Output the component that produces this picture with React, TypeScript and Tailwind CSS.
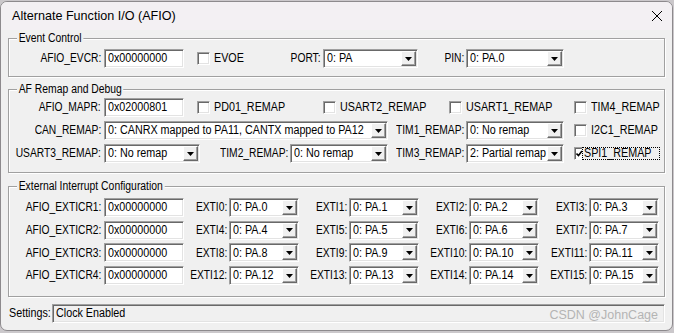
import type { ReactNode } from 'react'

// classic win32 sunken edge (edit boxes, combos, checkboxes)
const SUNKEN =
  'border border-t-[#a0a0a0] border-l-[#a0a0a0] border-r-white border-b-white shadow-[inset_1px_1px_0_#696969,inset_-1px_-1px_0_#e3e3e3]'

// the dialog font is a narrow sans; Liberation Sans squeezed horizontally stands in for it
function T({ children, right = false }: { children: ReactNode; right?: boolean }) {
  return (
    <span className={right ? 'inline-block shrink-0 origin-right scale-x-[0.82]' : 'inline-block shrink-0 origin-left scale-x-[0.86]'}>
      {children}
    </span>
  )
}

function Label({ className, children }: { className: string; children: ReactNode }) {
  return (
    <div className={`${className} shrink-0 flex justify-end whitespace-nowrap`}>
      <T right>{children}</T>
    </div>
  )
}

function Edit({ value }: { value: string }) {
  return (
    <div className={`w-[80px] h-[19px] shrink-0 bg-white ${SUNKEN} flex items-center pl-[3px] whitespace-nowrap`}>
      <T>{value}</T>
    </div>
  )
}

function Combo({ className, value }: { className: string; value: string }) {
  return (
    <div className={`${className} h-[19px] shrink-0 bg-white ${SUNKEN} flex p-[1px]`}>
      <div className="flex-1 flex items-center pl-[2px] overflow-hidden whitespace-nowrap">
        <T>{value}</T>
      </div>
      <div className="w-[15px] shrink-0 bg-[#f0f0f0] border border-t-white border-l-white border-r-[#696969] border-b-[#696969] shadow-[inset_-1px_-1px_0_#a0a0a0] flex items-center justify-center">
        <svg width="7" height="4" viewBox="0 0 7 4">
          <path d="M0 0h7L3.5 4z" fill="#000" />
        </svg>
      </div>
    </div>
  )
}

function Check({ label, className = '' }: { label: string; className?: string }) {
  return (
    <div className={`${className} flex items-center whitespace-nowrap`}>
      <div className={`w-[13px] h-[13px] shrink-0 bg-white ${SUNKEN}`} />
      <span className="ml-[4px]">
        <T>{label}</T>
      </span>
    </div>
  )
}

function Group({ title, className, children }: { title: string; className: string; children: ReactNode }) {
  return (
    <div className={`relative mx-[7px] border border-[#a0a0a0] shadow-[inset_1px_1px_0_#fff,1px_1px_0_#fff] ${className}`}>
      <span className="absolute left-[8px] top-[-8px] origin-left scale-x-[0.83] bg-[#f0f0f0] px-[2px] leading-[14px] whitespace-nowrap">
        {title}
      </span>
      {children}
    </div>
  )
}

const EXTI_LABEL = ['w-[45px]', 'w-[50px]', 'w-[50px]', 'w-[50px]']

export default function App() {
  return (
    <div className="w-[674px] h-[333px] bg-[#cbc8cb] pt-[1px] overflow-hidden">
      <div className="w-[673px] h-[330px] rounded-[7px] border border-[#8d8a8d] bg-[#f0f0f0] overflow-hidden font-['Liberation_Sans',Arial,sans-serif] text-[12.5px] leading-none text-black">
        {/* title bar */}
        <div className="h-[28px] bg-[#f3f0f3] flex items-center pl-[11px] pr-[9px] text-[12.6px]">
          <span>Alternate Function I/O (AFIO)</span>
          <svg className="ml-auto" width="12" height="12" viewBox="0 0 12 12">
            <path d="M1 1l10 10M11 1L1 11" stroke="#000" strokeWidth="1" />
          </svg>
        </div>

        <Group title="Event Control" className="mt-[8px] h-[39px] pt-[10px]">
          <div className="flex items-center h-[19px]">
            <Label className="w-[95px] pr-[3px]">AFIO_EVCR:</Label>
            <Edit value="0x00000000" />
            <div className="w-[139px] shrink-0 flex items-center">
              <Check label="EVOE" className="ml-[13px]" />
              <span className="ml-auto pr-[2px]">
                <T right>PORT:</T>
              </span>
            </div>
            <Combo className="w-[95px]" value="0: PA" />
            <Label className="w-[48px] pr-[2px]">PIN:</Label>
            <Combo className="w-[98px]" value="0: PA.0" />
          </div>
        </Group>

        <Group title="AF Remap and Debug" className="mt-[12px] h-[84px] pt-[8px] flex flex-col gap-[4px]">
          <div className="flex items-center h-[19px]">
            <Label className="w-[95px] pr-[3px]">AFIO_MAPR:</Label>
            <Edit value="0x02000801" />
            <Check label="PD01_REMAP" className="w-[139px] pl-[13px] shrink-0" />
            <Check label="USART2_REMAP" className="w-[126px] shrink-0" />
            <Check label="USART1_REMAP" className="w-[125px] shrink-0" />
            <Check label="TIM4_REMAP" />
          </div>
          <div className="flex items-center h-[19px]">
            <div className="ml-[26px] w-[69px] h-[19px] pr-[3px] shrink-0 flex items-center justify-end overflow-hidden whitespace-nowrap">
              <T right>CAN_REMAP:</T>
            </div>
            <Combo className="w-[284px]" value="0: CANRX mapped to PA11, CANTX mapped to PA12" />
            <Label className="w-[78px] pr-[2px]">TIM1_REMAP:</Label>
            <Combo className="w-[98px]" value="0: No remap" />
            <Check label="I2C1_REMAP" className="ml-[10px]" />
          </div>
          <div className="flex items-center h-[19px]">
            <Label className="w-[95px] pr-[3px]">USART3_REMAP:</Label>
            <Combo className="w-[96px]" value="0: No remap" />
            <Label className="w-[90px] pr-[2px]">TIM2_REMAP:</Label>
            <Combo className="w-[98px]" value="0: No remap" />
            <Label className="w-[78px] pr-[2px]">TIM3_REMAP:</Label>
            <Combo className="w-[98px]" value="2: Partial remap" />
            <div className="ml-[10px] flex items-center">
              <div className="w-[8px] h-[13px] shrink-0 bg-white border border-r-0 border-t-[#a0a0a0] border-l-[#a0a0a0] border-b-white shadow-[inset_1px_1px_0_#696969] flex items-center pl-[1px]">
                <svg width="6" height="7" viewBox="0 0 6 7">
                  <path d="M0.5 3.5l2 2L6 1" stroke="#000" strokeWidth="1.6" fill="none" />
                </svg>
              </div>
              <span className="w-[78px] h-[13px] px-[1px] flex items-center border border-dotted border-black whitespace-nowrap">
                <T>SPI1_REMAP</T>
              </span>
            </div>
          </div>
        </Group>

        <Group title="External Interrupt Configuration" className="mt-[13px] h-[111px] pt-[11px] flex flex-col gap-[3.7px]">
          {[0, 1, 2, 3].map((r) => (
            <div key={r} className="flex items-center h-[19px]">
              <Label className="w-[95px] pr-[3px]">AFIO_EXTICR{r + 1}:</Label>
              <Edit value="0x00000000" />
              {[0, 1, 2, 3].map((c) => {
                const n = r * 4 + c
                return (
                  <div key={c} className="flex items-center">
                    <Label className={`${EXTI_LABEL[c]} pr-[2px]`}>EXTI{n}:</Label>
                    <Combo className="w-[70px]" value={`0: PA.${n}`} />
                  </div>
                )
              })}
            </div>
          ))}
        </Group>

        {/* status line */}
        <div className="mt-[7px] mx-[7px] flex items-center h-[19px]">
          <div className="w-[44px] pl-[1px] shrink-0 whitespace-nowrap">
            <T>Settings:</T>
          </div>
          <div className={`flex-1 h-[19px] ${SUNKEN} flex items-center pl-[3px] pr-[6px] whitespace-nowrap`}>
            <T>Clock Enabled</T>
            <span className="ml-auto text-[12.5px] text-[#b4b4b4] pt-[3px]">CSDN @JohnCage</span>
          </div>
        </div>
      </div>
    </div>
  )
}
